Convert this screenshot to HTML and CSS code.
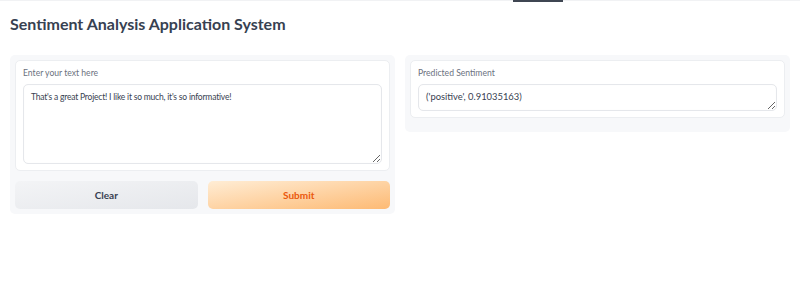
FILE: index.html
```html
<!DOCTYPE html>
<html lang="en">
<head>
    <meta charset="UTF-8">
    <title>Sentiment Analysis Application System</title>
    <link rel="stylesheet" href="styles.css">
</head>
<body>
    <div class="topline"><span class="tab-mark"></span></div>
    <h1 class="title">Sentiment Analysis Application System</h1>

    <div class="row">
        <div class="panel">
            <div class="block">
                <label class="label">Enter your text here</label>
                <textarea class="box box-tall" spellcheck="false">That's a great Project! I like it so much, it's so informative!</textarea>
            </div>
            <div class="actions">
                <button class="btn btn-clear">Clear</button>
                <button class="btn btn-submit">Submit</button>
            </div>
        </div>
        <div class="panel panel-out">
            <div class="block">
                <label class="label">Predicted Sentiment</label>
                <textarea class="box box-short box-result" spellcheck="false">('positive', 0.91035163)</textarea>
            </div>
        </div>
    </div>
</body>
</html>
```

FILE: styles.css
```css
body {
    margin: 0;
    background: #fff;
    font-family: "Lato", "Liberation Sans", sans-serif;
    color: #374151;
}
.topline {
    height: 2px;
    border-top: 1px solid #f1f2f4;
    position: relative;
}
.tab-mark {
    position: absolute;
    left: 513px;
    top: -1px;
    width: 50px;
    height: 2px;
    background: #3f4652;
}
.title {
    margin: 10px 0 0 10px;
    font-size: 16px;
    font-weight: 700;
    color: #374151;
    line-height: 22px;
}
.row {
    display: flex;
    align-items: flex-start;
    gap: 10px;
    margin: 20px 10px 0 10px;
}
.panel {
    flex: 1;
    background: #f7f8fa;
    border-radius: 5px;
    padding: 5px;
    box-sizing: border-box;
}
.panel-out {
    padding-bottom: 14px;
}
.block {
    background: #fff;
    border: 1px solid #eceef1;
    border-radius: 5px;
    padding: 7px 7px 6px 7px;
}
.label {
    display: block;
    font-size: 8.6px;
    color: #6b7280;
    margin-bottom: 6px;
}
.box {
    display: block;
    width: 100%;
    box-sizing: border-box;
    border: 1px solid #e5e7eb;
    border-radius: 5px;
    padding: 6px 7px;
    font-family: "Lato", "Liberation Sans", sans-serif;
    font-size: 8.5px;
    letter-spacing: -0.2px;
    line-height: 12px;
    color: #374151;
    resize: vertical;
    outline: none;
    box-shadow: inset 0 0 1px rgba(0, 0, 0, 0.05);
}
.box-result {
    font-size: 9.4px;
    letter-spacing: 0;
}
.box-tall {
    height: 80px;
}
.box-short {
    height: 27px;
}
.actions {
    display: flex;
    gap: 10px;
    margin-top: 10px;
}
.btn {
    flex: 1;
    height: 28px;
    border: none;
    border-radius: 5px;
    font-family: "Lato", "Liberation Sans", sans-serif;
    font-size: 10px;
    font-weight: 700;
}
.btn-clear {
    background: linear-gradient(to bottom right, #f3f4f6, #e5e7eb);
    color: #374151;
}
.btn-submit {
    background: linear-gradient(to bottom right, #ffedd5, #fdba74);
    color: #ea580c;
}
```
